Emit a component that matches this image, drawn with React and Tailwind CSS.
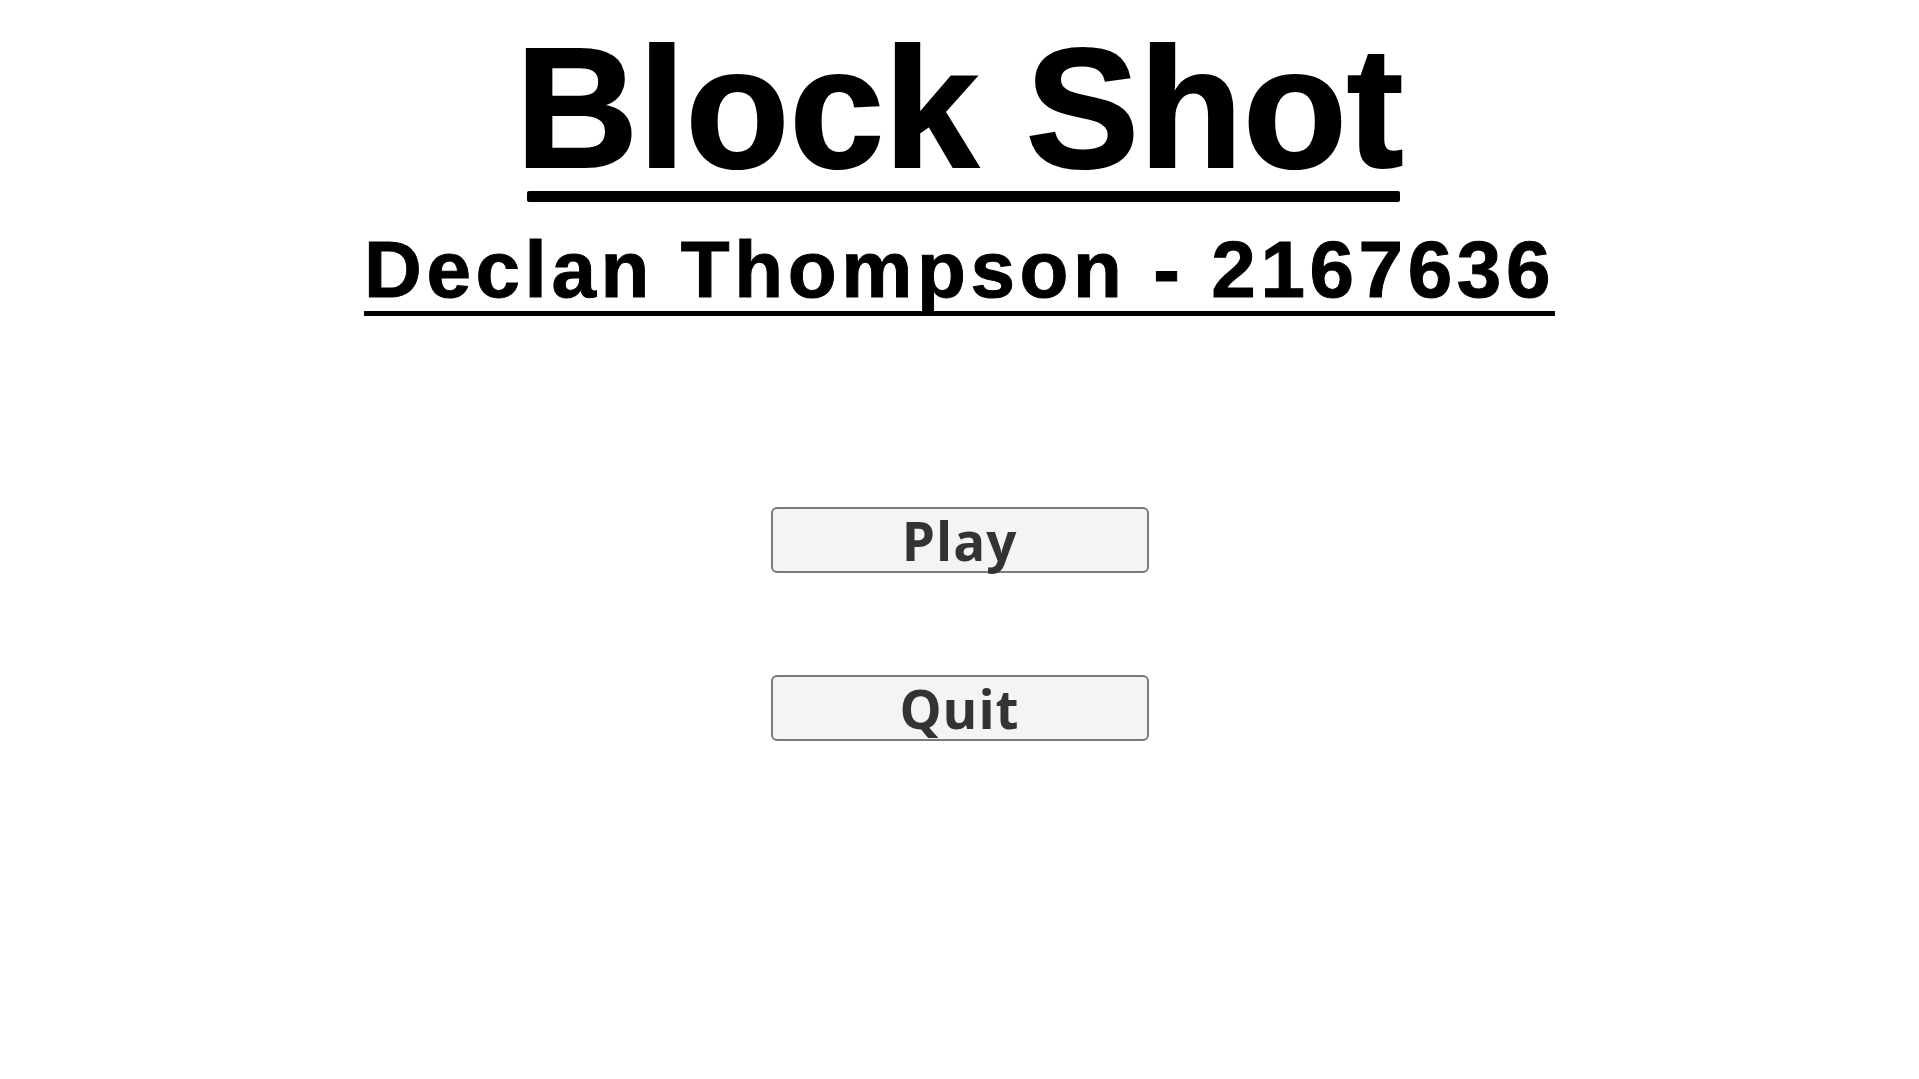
export default function App() {
  return (
    <div className="min-h-screen w-full bg-white flex flex-col items-center pt-[25px] font-['Liberation_Sans',Arial,sans-serif]">
      <h1 className="flex flex-col text-black">
        <span className="text-[170px] leading-[166px] font-bold [-webkit-text-stroke:2px_black] whitespace-nowrap">
          Block Shot
        </span>
        <span className="block h-[11px] ml-[11px] mr-[3px] rounded-[2px] bg-black" />
      </h1>
      <h2 className="mt-[28px] text-[80px] leading-[80px] font-bold text-black [-webkit-text-stroke:1px_black] tracking-[4.6px] underline decoration-[5px] underline-offset-[14px] [text-decoration-skip-ink:none] whitespace-nowrap">
        Declan Thompson - 2167636
      </h2>
      <div className="mt-[197px] flex flex-col gap-[102px]">
        <button className="w-[378px] h-[66px] flex items-center justify-center rounded-[6px] border-2 border-[#7a7a7a] bg-[#f4f4f4] text-[#333333] text-[53px] font-bold tracking-[1px] leading-none font-['Open_Sans','Noto_Sans',sans-serif]">
          Play
        </button>
        <button className="w-[378px] h-[66px] flex items-center justify-center rounded-[6px] border-2 border-[#7a7a7a] bg-[#f4f4f4] text-[#333333] text-[53px] font-bold tracking-[1px] leading-none font-['Open_Sans','Noto_Sans',sans-serif]">
          Quit
        </button>
      </div>
    </div>
  );
}
